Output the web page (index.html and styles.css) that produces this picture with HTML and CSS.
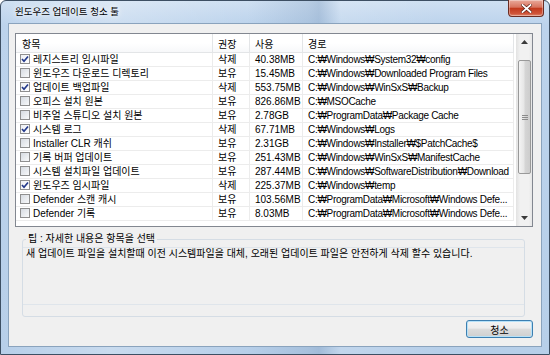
FILE: index.html
```html
<!DOCTYPE html>
<html lang="ko">
<head>
    <meta charset="UTF-8">
    <title>윈도우즈 업데이트 청소 툴</title>
    <link rel="stylesheet" href="styles.css">
</head>
<body>

    <div class="window">
        <div class="titlebar">
            <span class="title">윈도우즈 업데이트 청소 툴</span>
            <div class="close">
                <svg width="11" height="9" viewBox="0 0 11 9">
                    <path d="M1.5 1 L9.5 8 M9.5 1 L1.5 8" stroke="#5a2016" stroke-width="3.2" stroke-linecap="square"/>
                    <path d="M1.5 1 L9.5 8 M9.5 1 L1.5 8" stroke="#ffffff" stroke-width="1.8" stroke-linecap="square"/>
                </svg>
            </div>
        </div>

        <div class="client">
            <!-- Item list -->
            <div class="listbox">
                <div class="list">
                    <table>
                        <colgroup>
                            <col class="c-name"><col class="c-rec"><col class="c-size"><col class="c-path">
                        </colgroup>
                        <thead>
                            <tr><th class="first">항목</th><th>권장</th><th>사용</th><th>경로</th></tr>
                        </thead>
                        <tbody>
                            <tr><td class="name"><span class="chk on"><svg width="8" height="8" viewBox="0 0 8 8"><path d="M1 4 L3 6.2 L7 1.5" fill="none" stroke="#23398a" stroke-width="1.7"/></svg></span>레지스트리 임시파일</td><td>삭제</td><td>40.38MB</td><td class="path">C:₩Windows₩System32₩config</td></tr>
                            <tr><td class="name"><span class="chk"></span>윈도우즈 다운로드 디렉토리</td><td>보유</td><td>15.45MB</td><td class="path">C:₩Windows₩Downloaded Program Files</td></tr>
                            <tr><td class="name"><span class="chk on"><svg width="8" height="8" viewBox="0 0 8 8"><path d="M1 4 L3 6.2 L7 1.5" fill="none" stroke="#23398a" stroke-width="1.7"/></svg></span>업데이트 백업파일</td><td>삭제</td><td>553.75MB</td><td class="path">C:₩Windows₩WinSxS₩Backup</td></tr>
                            <tr><td class="name"><span class="chk"></span>오피스 설치 원본</td><td>보유</td><td>826.86MB</td><td class="path">C:₩MSOCache</td></tr>
                            <tr><td class="name"><span class="chk"></span>비주얼 스튜디오 설치 원본</td><td>보유</td><td>2.78GB</td><td class="path">C:₩ProgramData₩Package Cache</td></tr>
                            <tr><td class="name"><span class="chk on"><svg width="8" height="8" viewBox="0 0 8 8"><path d="M1 4 L3 6.2 L7 1.5" fill="none" stroke="#23398a" stroke-width="1.7"/></svg></span>시스템 로그</td><td>삭제</td><td>67.71MB</td><td class="path">C:₩Windows₩Logs</td></tr>
                            <tr><td class="name"><span class="chk"></span>Installer CLR 캐쉬</td><td>보유</td><td>2.31GB</td><td class="path">C:₩Windows₩Installer₩$PatchCache$</td></tr>
                            <tr><td class="name"><span class="chk"></span>기록 버퍼 업데이트</td><td>보유</td><td>251.43MB</td><td class="path">C:₩Windows₩WinSxS₩ManifestCache</td></tr>
                            <tr><td class="name"><span class="chk"></span>시스템 설치파일 업데이트</td><td>보유</td><td>287.44MB</td><td class="path">C:₩Windows₩SoftwareDistribution₩Download</td></tr>
                            <tr><td class="name"><span class="chk on"><svg width="8" height="8" viewBox="0 0 8 8"><path d="M1 4 L3 6.2 L7 1.5" fill="none" stroke="#23398a" stroke-width="1.7"/></svg></span>윈도우즈 임시파일</td><td>삭제</td><td>225.37MB</td><td class="path">C:₩Windows₩temp</td></tr>
                            <tr><td class="name"><span class="chk"></span>Defender 스캔 캐시</td><td>보유</td><td>103.56MB</td><td class="path">C:₩ProgramData₩Microsoft₩Windows Defe...</td></tr>
                            <tr><td class="name"><span class="chk"></span>Defender 기록</td><td>보유</td><td>8.03MB</td><td class="path">C:₩ProgramData₩Microsoft₩Windows Defe...</td></tr>
                        </tbody>
                    </table>
                </div>

                <!-- Scrollbar -->
                <div class="scroll">
                    <div class="sbtn">
                        <svg width="7" height="4" viewBox="0 0 7 4"><path d="M0 4 L3.5 0 L7 4 Z" fill="#3b3b3b"/></svg>
                    </div>
                    <div class="track">
                        <div class="thumb">
                            <div class="grip"></div>
                        </div>
                    </div>
                    <div class="sbtn">
                        <svg width="7" height="4" viewBox="0 0 7 4"><path d="M0 0 L7 0 L3.5 4 Z" fill="#3b3b3b"/></svg>
                    </div>
                </div>
            </div>

            <!-- Tip -->
            <fieldset class="tip">
                <legend>팁 : 자세한 내용은 항목을 선택</legend>
                <div class="desc">새 업데이트 파일을 설치할때 이전 시스템파일을 대체, 오래된 업데이트 파일은 안전하게 삭제 할수 있습니다.</div>
            </fieldset>

            <div class="actions">
                <button type="button" class="btn">청소</button>
            </div>
        </div>
    </div>

</body>
</html>
```

FILE: styles.css
```css
/* Global */
body {
    margin: 0;
    font-family: "Liberation Sans", "DejaVu Sans", "Noto Sans CJK KR", sans-serif;
    font-size: 10px;
    color: #000;
    background: #fff;
}

/* Window frame */
.window {
    width: 550px;
    height: 355px;
    box-sizing: border-box;
    border: 1px solid #3d4f63;
    border-radius: 6px 6px 0 0;
    padding: 0 7px 7px;
    display: flex;
    flex-direction: column;
    background:
        linear-gradient(90deg, rgba(255,255,255,0) 0, rgba(255,255,255,0.25) 20%, rgba(255,255,255,0) 45%,
            rgba(120,150,185,0.25) 56%, rgba(120,150,185,0.35) 58%, rgba(255,255,255,0.15) 62%, rgba(255,255,255,0) 80%),
        linear-gradient(#cfe0f2, #bcd3ec 24px, #b7cfe9);
}

.titlebar {
    height: 22px;
    display: flex;
    justify-content: space-between;
    align-items: flex-start;
}

.title {
    padding-left: 7px;
    line-height: 22px;
    font-size: 9.5px;
    text-shadow: 0 0 5px #fff, 0 0 8px rgba(255,255,255,0.9);
}

.close {
    width: 36px;
    height: 17px;
    margin-top: -1px;
    margin-right: -2px;
    box-sizing: border-box;
    border: 1px solid #6b2c22;
    border-top: none;
    border-radius: 0 0 4px 4px;
    display: flex;
    justify-content: center;
    align-items: center;
    background: linear-gradient(#e9a99b, #d8735e 45%, #c2391d 52%, #cf553a 85%, #e08a70);
    box-shadow: inset 0 0 0 1px rgba(255,255,255,0.35);
}

/* Client area */
.client {
    flex: 1;
    background: #f0f0f0;
    border: 1px solid #8aa3bd;
    padding: 9px 8px 0 6px;
    display: flex;
    flex-direction: column;
}

/* List view */
.listbox {
    height: 194px;
    box-sizing: border-box;
    border: 1px solid #828790;
    background: #fff;
    display: flex;
}

.list {
    flex: 1;
    overflow: hidden;
}

table {
    border-collapse: separate;
    border-spacing: 0;
    table-layout: fixed;
    width: 498px;
}

.c-name { width: 197px; }
.c-rec { width: 37px; }
.c-size { width: 53px; }
.c-path { width: 211px; }

th {
    font-weight: normal;
    text-align: left;
    height: 18px;
    padding: 0 5px;
    border-right: 1px solid #e3e5e7;
    border-bottom: 1px solid #e3e5e7;
    background: linear-gradient(#fff, #fff 50%, #f7f8fa);
}

th.first {
    padding-left: 6px;
}

td {
    line-height: 13px;
    padding: 0 5px;
    white-space: nowrap;
    overflow: hidden;
    border-right: 1px solid #ececec;
    border-bottom: 1px solid #ececec;
}

td.name {
    padding-left: 4px;
}

td.path {
    padding-right: 0;
    letter-spacing: -0.3px;
}

.chk {
    display: inline-block;
    width: 10px;
    height: 10px;
    box-sizing: border-box;
    border: 1px solid #8f8f8f;
    margin-right: 3px;
    vertical-align: -1px;
    background: linear-gradient(135deg, #d6dbe2, #f8f9fa);
}

.chk.on {
    background: linear-gradient(135deg, #eef0f3, #fff);
}

.chk svg {
    display: block;
}

/* Scrollbar */
.scroll {
    width: 16px;
    display: flex;
    flex-direction: column;
    background: linear-gradient(90deg, #e2e2e2, #f1f1f1 25%, #f1f1f1 80%, #e6e6e6);
}

.sbtn {
    height: 16px;
    display: flex;
    justify-content: center;
    align-items: center;
}

.track {
    flex: 1;
}

.thumb {
    margin: 10px 1px 0 2px;
    height: 114px;
    box-sizing: border-box;
    border: 1px solid #999;
    border-radius: 2px;
    background: linear-gradient(90deg, #f4f4f4, #e6e6e6 45%, #d5d5d5 55%, #cdcdcd);
    display: flex;
    justify-content: center;
    align-items: center;
}

.grip {
    width: 6px;
    height: 5px;
    background: repeating-linear-gradient(#8b8b8b 0 1px, transparent 1px 2px);
}

/* Tip group */
.tip {
    margin: 6px 8px 0 7px;
    padding: 0;
    min-width: 0;
    border: 1px solid #d5dde5;
    border-radius: 3px;
}

.tip legend {
    margin-left: 3px;
    padding: 0 2px;
    line-height: 12px;
}

.desc {
    margin: 2px 0 11px;
    height: 56px;
    padding: 0 3px;
    line-height: 12px;
    border-top: 1px solid #dfe5eb;
    border-bottom: 1px solid #dfe5eb;
}

/* Buttons */
.actions {
    display: flex;
    justify-content: flex-end;
    margin-top: 3px;
}

.btn {
    width: 67px;
    height: 18px;
    padding: 0;
    font-family: inherit;
    font-size: 10px;
    color: #000;
    border: 1px solid #3c7fb1;
    border-radius: 3px;
    background: linear-gradient(#f4f4f4, #ececec 45%, #dcdcdc 50%, #cfcfcf);
    box-shadow: inset 0 0 0 1px #b6e1f8;
}
```
